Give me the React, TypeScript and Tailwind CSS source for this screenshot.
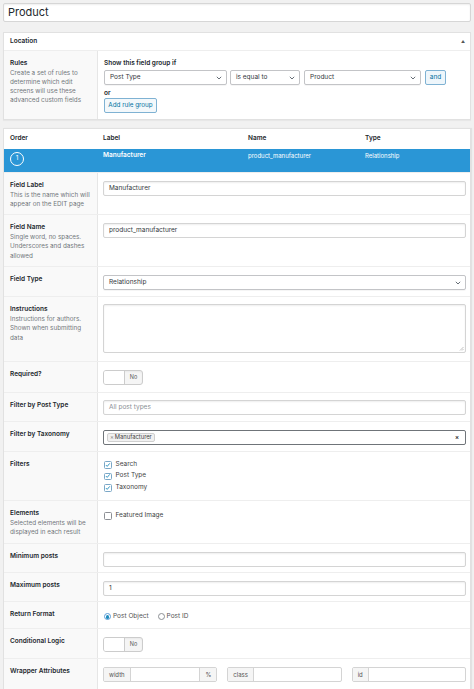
import React from "react";

const font = "font-['Inter','Liberation_Sans',sans-serif]";

function Chevron() {
  return (
    <svg width="6" height="4" viewBox="0 0 6 4" className="shrink-0">
      <path d="M0.8 0.8 L3 3 L5.2 0.8" fill="none" stroke="#555d66" strokeWidth="0.9" />
    </svg>
  );
}

function Select({ value, className }: { value: string; className: string }) {
  return (
    <div
      className={`${className} h-[15px] flex items-center justify-between border border-[#c3c4c7] rounded-[2px] bg-white pl-[5px] pr-[4px] text-[6.5px] text-[#32373c] shadow-[0_1px_0_rgba(0,0,0,0.04)]`}
    >
      <span>{value}</span>
      <Chevron />
    </div>
  );
}

function Input({ value, placeholder }: { value?: string; placeholder?: string }) {
  return (
    <div className="h-[15px] flex items-center border border-[#d4d4d4] rounded-[2px] bg-white px-[5px] text-[6.5px] text-[#32373c] shadow-[inset_0_1px_2px_rgba(0,0,0,0.07)]">
      {value ? <span>{value}</span> : <span className="text-[#8a8f94]">{placeholder}</span>}
    </div>
  );
}

function Toggle() {
  return (
    <div className="w-[40px] h-[15px] flex border border-[#cccccc] rounded-[3px] bg-[#f5f5f5] shadow-[inset_0_1px_2px_rgba(0,0,0,0.05)]">
      <div className="w-[21px] h-full bg-white border-r border-[#cccccc] rounded-l-[2px]" />
      <div className="flex-1 flex items-center justify-center text-[5.5px] text-[#555]">No</div>
    </div>
  );
}

function Check({ checked, label }: { checked: boolean; label: string }) {
  return (
    <div className="flex items-center h-[11.5px]">
      <div
        className={`ml-[1px] w-[7.5px] h-[7.5px] border rounded-[1.5px] bg-white flex items-center justify-center ${
          checked ? "border-[#7aa7c7]" : "border-[#8c8f94]"
        }`}
      >
        {checked && (
          <svg width="6" height="6" viewBox="0 0 6 6">
            <path d="M1 3.1 L2.4 4.5 L5.2 1.2" fill="none" stroke="#1e8cbe" strokeWidth="1" />
          </svg>
        )}
      </div>
      <span className="ml-[4px] text-[6.5px] text-[#444]">{label}</span>
    </div>
  );
}

function Radio({ checked, label }: { checked: boolean; label: string }) {
  return (
    <div className="flex items-center">
      <div
        className={`w-[7px] h-[7px] rounded-full border bg-white flex items-center justify-center ${
          checked ? "border-[#5b9dd9]" : "border-[#8c8f94]"
        }`}
      >
        {checked && <div className="w-[3.5px] h-[3.5px] rounded-full bg-[#1e8cbe]" />}
      </div>
      <span className="ml-[2px] text-[6.5px] text-[#555]">{label}</span>
    </div>
  );
}

function Row({
  title,
  desc,
  h,
  children,
}: {
  title: string;
  desc?: string[];
  h: string;
  children?: React.ReactNode;
}) {
  return (
    <div className={`flex border-t border-[#eeeeee] ${h}`}>
      <div className="w-[94px] shrink-0 bg-[#f9f9f9] border-r border-[#e6e6e6] pl-[6px] pr-[4px] pt-[8px]">
        <div className="text-[6.5px] font-semibold leading-[9px] text-[#23282d]">{title}</div>
        {desc && (
          <div className="mt-[0.5px] text-[6.3px] leading-[9.5px] text-[#72777c]">
            {desc.map((d) => (
              <div key={d}>{d}</div>
            ))}
          </div>
        )}
      </div>
      <div className="flex-1 min-w-0 pl-[5px] pr-[4px] pt-[8px]">{children}</div>
    </div>
  );
}

function Addon({ label, className }: { label: string; className?: string }) {
  return (
    <div
      className={`h-full flex items-center px-[5px] bg-[#f5f5f5] text-[6px] text-[#555] ${className ?? ""}`}
    >
      {label}
    </div>
  );
}

export default function App() {
  return (
    <div className={`min-h-screen bg-[#f1f1f1] px-[3px] pt-[3px] pb-0 ${font}`}>
      {/* Title */}
      <div className="h-[19px] flex items-center border border-[#d6d6d6] rounded-[2px] bg-white px-[4px] text-[11px] text-[#23282d] shadow-[inset_0_1px_2px_rgba(0,0,0,0.07)]">
        Product
      </div>

      {/* Location box */}
      <div className="mt-[10px] border border-[#e1e1e1] bg-white shadow-[0_1px_1px_rgba(0,0,0,0.04)]">
        <div className="h-[18px] flex items-center justify-between border-b border-[#eeeeee] pl-[6px] pr-[5px]">
          <span className="text-[6.5px] font-semibold text-[#23282d]">Location</span>
          <span className="text-[4px] text-[#555]">▲</span>
        </div>
        <div className="flex h-[68px]">
          <div className="w-[94px] shrink-0 bg-[#f9f9f9] border-r border-[#e6e6e6] pl-[6px] pr-[4px] pt-[8px]">
            <div className="text-[6.5px] font-semibold leading-[9px] text-[#23282d]">Rules</div>
            <div className="mt-[0.5px] text-[6.3px] leading-[9.2px] text-[#72777c]">
              <div>Create a set of rules to</div>
              <div>determine which edit</div>
              <div>screens will use these</div>
              <div>advanced custom fields</div>
            </div>
          </div>
          <div className="flex-1 pl-[6px] pt-[8px]">
            <div className="text-[6.5px] font-semibold leading-[9px] text-[#23282d]">
              Show this field group if
            </div>
            <div className="mt-[2px] flex items-center">
              <Select value="Post Type" className="w-[123px]" />
              <Select value="is equal to" className="ml-[3px] w-[70px]" />
              <Select value="Product" className="ml-[4px] w-[117px]" />
              <div className="ml-[4px] w-[21px] h-[15px] flex items-center justify-center border border-[#7fb2d3] rounded-[2px] bg-[#eef6fb] text-[6.5px] text-[#0071a1]">
                and
              </div>
            </div>
            <div className="mt-[3.5px] text-[6.5px] font-semibold leading-[9px] text-[#23282d]">or</div>
            <div className="mt-[0.5px] w-[53px] h-[15px] flex items-center justify-center border border-[#7fb2d3] rounded-[2px] bg-[#f3f8fb] text-[6.3px] text-[#0071a1]">
              Add rule group
            </div>
          </div>
        </div>
      </div>

      {/* Fields box */}
      <div className="mt-[8px] border border-[#e1e1e1] border-b-0 bg-white shadow-[1px_0_1px_rgba(0,0,0,0.06)]">
        <div className="h-[20px] flex items-center text-[6.5px] font-semibold text-[#23282d]">
          <div className="w-[99px] pl-[6px]">Order</div>
          <div className="w-[145px]">Label</div>
          <div className="w-[117px]">Name</div>
          <div>Type</div>
        </div>
        <div className="h-[23px] flex items-start bg-[#2a96d6] text-white">
          <div className="w-[99px] pl-[6px] pt-[3px]">
            <div className="w-[14px] h-[14px] rounded-full border border-white flex items-center justify-center text-[6.5px]">
              1
            </div>
          </div>
          <div className="w-[145px] pt-[2px] text-[6.5px] font-semibold leading-[9px]">Manufacturer</div>
          <div className="w-[117px] pt-[2px] text-[6px] leading-[9px]">product_manufacturer</div>
          <div className="pt-[2px] text-[6px] leading-[9px]">Relationship</div>
        </div>

        <Row title="Field Label" desc={["This is the name which will", "appear on the EDIT page"]} h="h-[42px]">
          <Input value="Manufacturer" />
        </Row>
        <Row
          title="Field Name"
          desc={["Single word, no spaces.", "Underscores and dashes", "allowed"]}
          h="h-[52px]"
        >
          <Input value="product_manufacturer" />
        </Row>
        <Row title="Field Type" h="h-[30px]">
          <Select value="Relationship" className="w-full" />
        </Row>
        <Row
          title="Instructions"
          desc={["Instructions for authors.", "Shown when submitting", "data"]}
          h="h-[65px]"
        >
          <div className="relative h-[49px] -mt-[1px] border border-[#d4d4d4] rounded-[2px] bg-white shadow-[inset_0_1px_2px_rgba(0,0,0,0.07)]">
            <svg width="5" height="5" viewBox="0 0 5 5" className="absolute right-[1px] bottom-[1px]">
              <path d="M4.5 1 L1 4.5 M4.5 3 L3 4.5" stroke="#999" strokeWidth="0.6" />
            </svg>
          </div>
        </Row>
        <Row title="Required?" h="h-[31px]">
          <Toggle />
        </Row>
        <Row title="Filter by Post Type" h="h-[29px]">
          <div className="-mt-[1px]">
            <Input placeholder="All post types" />
          </div>
        </Row>
        <Row title="Filter by Taxonomy" h="h-[30px]">
          <div className="h-[15px] flex items-center justify-between border border-[#6f7479] rounded-[2px] bg-white pl-[3px] pr-[6px]">
            <div className="h-[9px] flex items-center border border-[#cfcfcf] rounded-[2px] bg-[#f1f1f1] px-[2px] text-[5.8px] text-[#444]">
              <span className="mr-[1px] text-[#888]">×</span>Manufacturer
            </div>
            <span className="text-[6px] font-bold text-[#333] leading-none">×</span>
          </div>
        </Row>
        <Row title="Filters" h="h-[49px]">
          <div className="-mt-[1px]">
            <Check checked label="Search" />
            <Check checked label="Post Type" />
            <Check checked label="Taxonomy" />
          </div>
        </Row>
        <Row
          title="Elements"
          desc={["Selected elements will be", "displayed in each result"]}
          h="h-[43px]"
        >
          <div className="mt-[1px]">
            <Check checked={false} label="Featured Image" />
          </div>
        </Row>
        <Row title="Minimum posts" h="h-[29px]">
          <Input value="" />
        </Row>
        <Row title="Maximum posts" h="h-[29px]">
          <Input value="1" />
        </Row>
        <Row title="Return Format" h="h-[27px]">
          <div className="mt-[2px] flex items-center pl-[1px]">
            <Radio checked label="Post Object" />
            <div className="ml-[9px]">
              <Radio checked={false} label="Post ID" />
            </div>
          </div>
        </Row>
        <Row title="Conditional Logic" h="h-[30px]">
          <Toggle />
        </Row>
        <Row title="Wrapper Attributes" h="h-[31px]">
          <div className="flex gap-[10px]">
            <div className="flex-1 h-[15px] flex border border-[#d4d4d4] rounded-[2px] bg-white overflow-hidden">
              <Addon label="width" className="border-r border-[#d4d4d4]" />
              <div className="flex-1" />
              <Addon label="%" className="border-l border-[#d4d4d4]" />
            </div>
            <div className="flex-1 h-[15px] flex border border-[#d4d4d4] rounded-[2px] bg-white overflow-hidden">
              <Addon label="class" className="border-r border-[#d4d4d4]" />
              <div className="flex-1" />
            </div>
            <div className="flex-1 h-[15px] flex border border-[#d4d4d4] rounded-[2px] bg-white overflow-hidden">
              <Addon label="id" className="border-r border-[#d4d4d4]" />
              <div className="flex-1" />
            </div>
          </div>
        </Row>
      </div>
    </div>
  );
}
